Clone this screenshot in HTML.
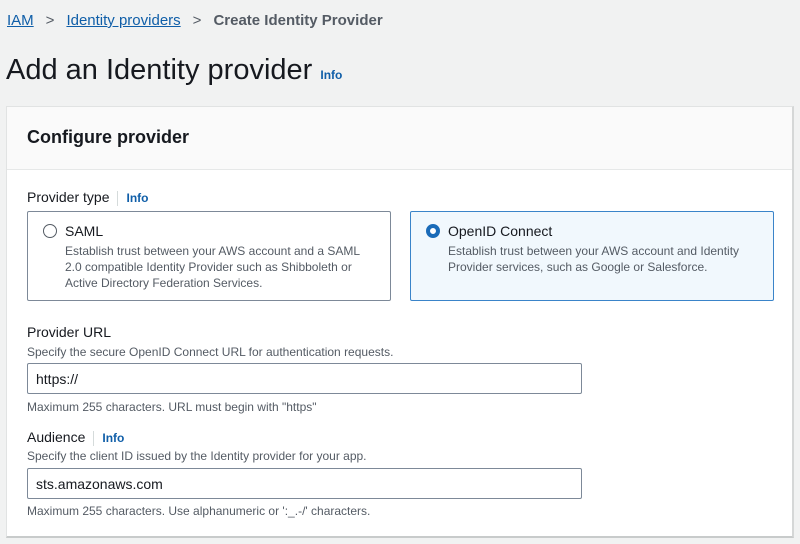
<!DOCTYPE html>
<html><head><style>
*{box-sizing:border-box;margin:0;padding:0}
body{width:800px;height:544px;background:#f1f2f2;font-family:"Liberation Sans",sans-serif;color:#16191f;position:relative;overflow:hidden}
.a{position:absolute;white-space:nowrap}
.link{color:#0f5ea8;text-decoration:underline}
.info{color:#0f5ea8;font-weight:bold;font-size:12px}
.box{position:absolute;left:6px;top:106px;width:788px;height:432px;background:#fff;border:1px solid #e1e3e3;border-right:2px solid #d5d7d7;border-bottom:2px solid #c8cbcb}
.hdr{position:absolute;left:0;top:0;right:0;height:63px;background:#fafafa;border-bottom:1px solid #e6e8e8}
.card{position:absolute;top:104px;width:364px;height:90px;border:1px solid #7d8998;border-radius:2px;background:#fff}
.card.sel{border-color:#3a84c9;background:#f1f8fd}
.ct{position:absolute;left:37px;top:11px;font-size:14px}
.cd{position:absolute;left:37px;top:31px;font-size:12px;color:#545b64;line-height:16px}
.rad{position:absolute;left:15px;top:12px;width:14px;height:14px;border-radius:50%;border:1.5px solid #545b64}
.rad.on{border:4px solid #1a6bb8;background:#fff}
.inp{position:absolute;left:20px;width:555px;height:31px;border:1px solid #7d8998;border-radius:2px;font-size:14px;padding:7px 0 0 8px}
.lab{font-size:14px}
.hlp{font-size:12px;color:#545b64}
.sep{display:inline-block;width:1px;height:15px;background:#d5dbdb;vertical-align:middle;margin:0 8px}
</style></head><body>
<div class="a" style="left:7px;top:12px;font-size:15px"><span class="link">IAM</span><span style="color:#545b64;margin:0 12px">&gt;</span><span class="link">Identity providers</span><span style="color:#545b64;margin:0 12px">&gt;</span><span style="color:#545b64;font-weight:bold">Create Identity Provider</span></div>
<div class="a" style="left:6px;top:54px;font-size:29px">Add an Identity provider <span class="info">Info</span></div>
<div class="box">
<div class="hdr"><div class="a" style="left:20px;top:20px;font-size:18px;font-weight:bold">Configure provider</div></div>
<div class="a lab" style="left:20px;top:82px">Provider type<span class="sep"></span><span class="info">Info</span></div>
<div class="card" style="left:20px"><div class="rad"></div><div class="ct">SAML</div><div class="cd">Establish trust between your AWS account and a SAML<br>2.0 compatible Identity Provider such as Shibboleth or<br>Active Directory Federation Services.</div></div>
<div class="card sel" style="left:403px"><div class="rad on"></div><div class="ct">OpenID Connect</div><div class="cd">Establish trust between your AWS account and Identity<br>Provider services, such as Google or Salesforce.</div></div>
<div class="a lab" style="left:20px;top:217px">Provider URL</div>
<div class="a hlp" style="left:20px;top:238px">Specify the secure OpenID Connect URL for authentication requests.</div>
<div class="inp" style="top:256px">https://</div>
<div class="a hlp" style="left:20px;top:293px">Maximum 255 characters. URL must begin with "https"</div>
<div class="a lab" style="left:20px;top:322px">Audience<span class="sep"></span><span class="info">Info</span></div>
<div class="a hlp" style="left:20px;top:342px">Specify the client ID issued by the Identity provider for your app.</div>
<div class="inp" style="top:361px">sts.amazonaws.com</div>
<div class="a hlp" style="left:20px;top:397px">Maximum 255 characters. Use alphanumeric or ':_.-/' characters.</div>
</div>
</body></html>
